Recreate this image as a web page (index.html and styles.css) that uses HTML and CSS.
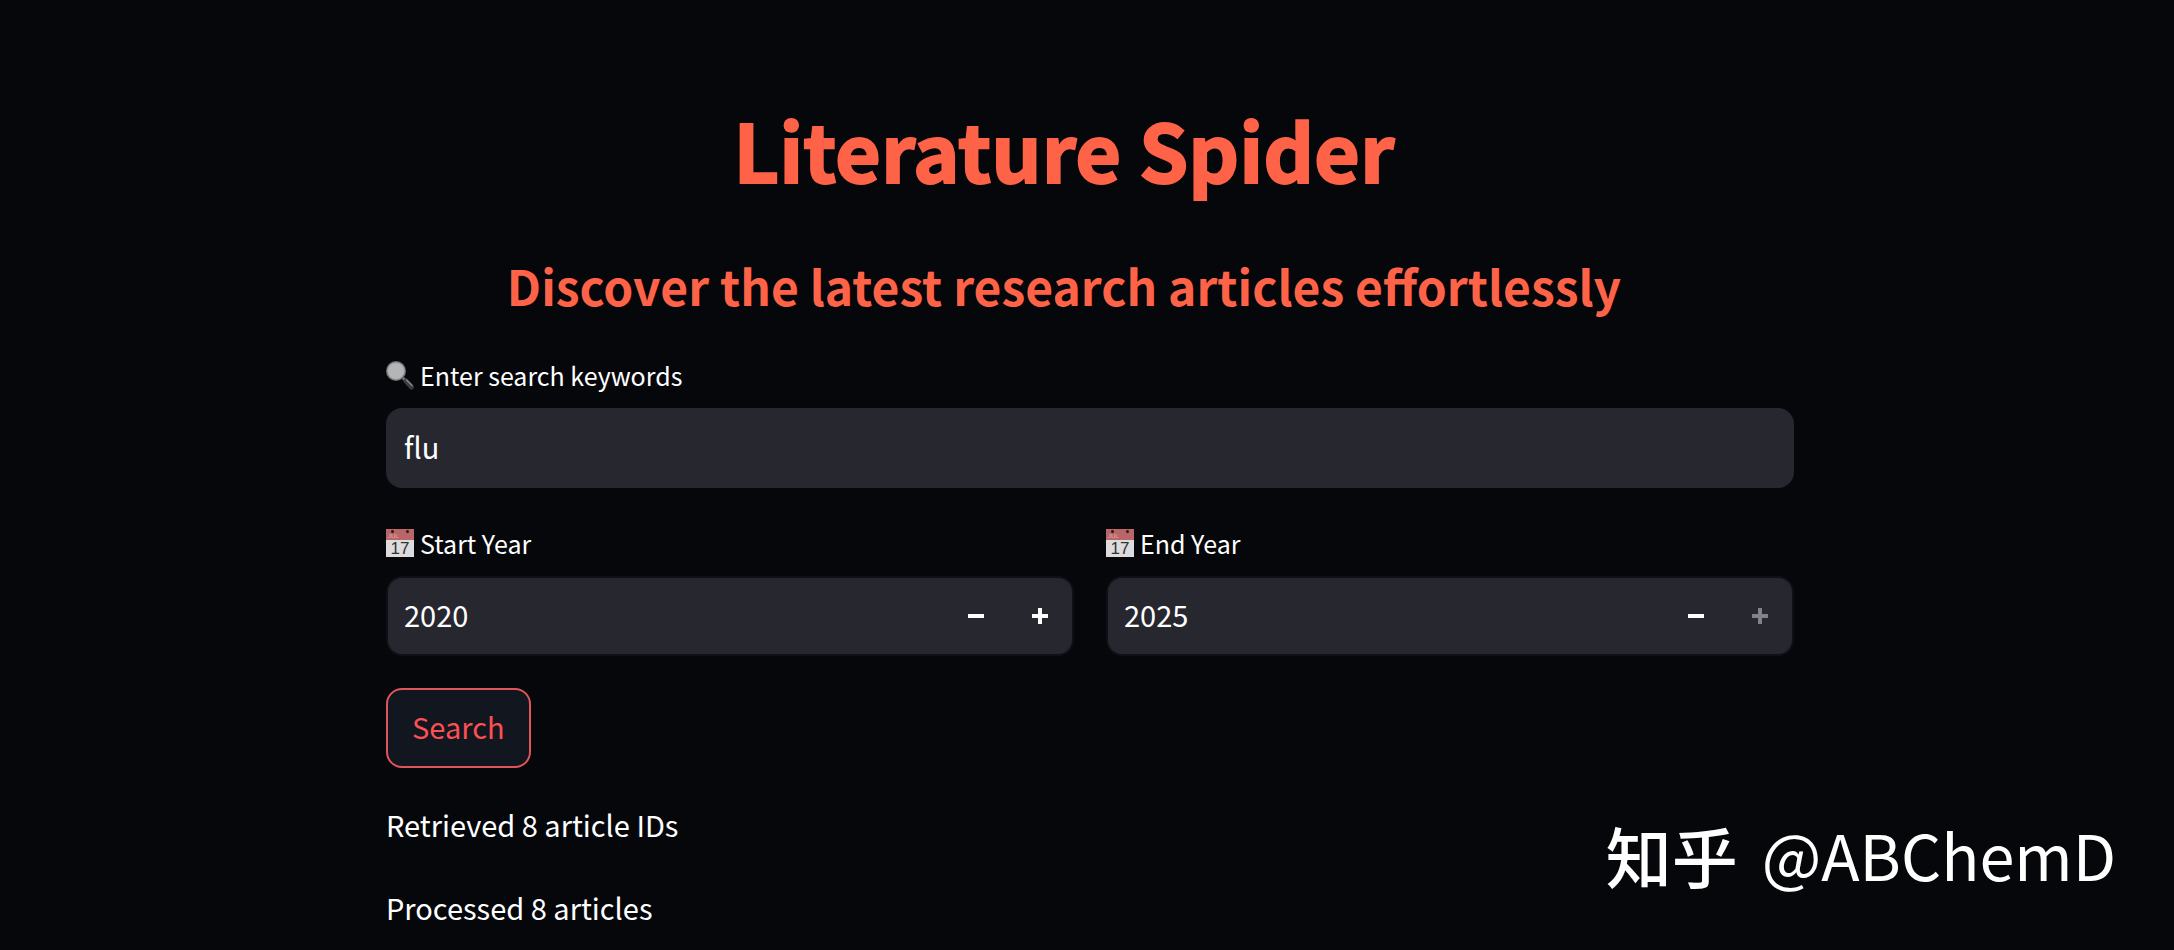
FILE: index.html
```html
<!DOCTYPE html>
<html lang="en">
<head>
  <meta charset="UTF-8">
  <meta name="viewport" content="width=device-width, initial-scale=1.0">
  <title>Literature Spider</title>
  <link rel="stylesheet" href="styles.css">
</head>
<body>
  <main class="container">
    <h1>Literature Spider</h1>
    <h2>Discover the latest research articles effortlessly</h2>

    <form id="searchForm">
      <div class="form-group">
        <label for="keywords">
          <svg class="icon" viewBox="0 0 28 28" aria-hidden="true">
            <path d="M17 17l2 2" stroke="#77797c" stroke-width="3"/>
            <path d="M20 20l5.500 6" stroke="#3a3c40" stroke-width="5" stroke-linecap="round"/>
            <path d="M20.500 19l5.500 5.500" stroke="#85878a" stroke-width="1.500" stroke-linecap="round"/>
            <circle cx="10" cy="10" r="10" fill="#6d6f71"/>
            <circle cx="10" cy="10" r="9" fill="#98999b"/>
            <circle cx="10" cy="10" r="8" fill="#b4b5b7"/>
          </svg>
          Enter search keywords
        </label>
        <input class="field" type="text" id="keywords" value="flu">
      </div>

      <div class="form-row">
        <div class="form-group">
          <label for="startYear">
            <svg class="icon" viewBox="0 0 28 28" aria-hidden="true">
              <rect width="28" height="28" fill="#dcdcdc"/>
              <rect width="28" height="11" fill="#b9666a"/>
              <circle cx="6.500" cy="2.500" r="1.500" fill="#2b1316"/>
              <circle cx="21.500" cy="2.500" r="1.500" fill="#2b1316"/>
              <text class="icon-month" x="2" y="9">JUL</text>
              <text class="icon-day" x="14" y="25">17</text>
            </svg>
            Start Year
          </label>
          <div class="field number-field">
            <input type="number" id="startYear" value="2020" max="2025">
            <button type="button" class="step" aria-label="Decrease start year">
              <svg viewBox="0 0 16 16"><path d="M0 6h16v4H0z"/></svg>
            </button>
            <button type="button" class="step" aria-label="Increase start year">
              <svg viewBox="0 0 16 16"><path d="M6 0h4v6h6v4h-6v6H6v-6H0V6h6z"/></svg>
            </button>
          </div>
        </div>

        <div class="form-group">
          <label for="endYear">
            <svg class="icon" viewBox="0 0 28 28" aria-hidden="true">
              <rect width="28" height="28" fill="#dcdcdc"/>
              <rect width="28" height="11" fill="#b9666a"/>
              <circle cx="6.500" cy="2.500" r="1.500" fill="#2b1316"/>
              <circle cx="21.500" cy="2.500" r="1.500" fill="#2b1316"/>
              <text class="icon-month" x="2" y="9">JUL</text>
              <text class="icon-day" x="14" y="25">17</text>
            </svg>
            End Year
          </label>
          <div class="field number-field">
            <input type="number" id="endYear" value="2025" max="2025">
            <button type="button" class="step" aria-label="Decrease end year">
              <svg viewBox="0 0 16 16"><path d="M0 6h16v4H0z"/></svg>
            </button>
            <button type="button" class="step" aria-label="Increase end year" disabled>
              <svg viewBox="0 0 16 16"><path d="M6 0h4v6h6v4h-6v6H6v-6H0V6h6z"/></svg>
            </button>
          </div>
        </div>
      </div>

      <button type="submit" class="search-btn">Search</button>
    </form>

    <div class="status">
      <p>Retrieved 8 article IDs</p>
      <p>Processed 8 articles</p>
    </div>
  </main>

  <div class="watermark"><span class="brand" lang="zh">知乎</span> <span>@ABChemD</span></div>
</body>
</html>
```
FILE: styles.css
```css
* {
  box-sizing: border-box;
}

body {
  margin: 0;
  padding-left: 6px;
  background: #06070b;
  color: #fff;
  font-family: "Noto Sans CJK SC", "Noto Sans", sans-serif;
  font-size: 29px;
  line-height: 48px;
}

.container {
  max-width: 1408px;
  margin: 0 auto;
  padding-top: 96px;
}

h1,
h2 {
  margin: 0;
  padding-right: 52px;
  color: #ff6347;
  text-align: center;
  font-weight: 700;
}

h1 {
  margin-bottom: 48px;
  font-size: 79px;
  line-height: 106px;
  -webkit-text-stroke: 2px #ff6347;
}

h2 {
  margin-bottom: 32px;
  font-size: 48px;
  line-height: 70px;
}

label {
  display: flex;
  align-items: center;
  gap: 6px;
  margin-bottom: 10px;
  font-size: 25px;
  line-height: 46px;
}

input,
button {
  font: inherit;
  color: inherit;
}

form {
  display: flex;
  flex-direction: column;
  gap: 32px;
}

.form-row {
  display: grid;
  grid-template-columns: 1fr 1fr;
  gap: 32px;
}

.field {
  display: block;
  width: 100%;
  height: 80px;
  padding: 0 16px 4px;
  border: 2px solid #272730;
  border-radius: 16px;
  background: #272730;
}

.number-field {
  display: flex;
  padding: 0;
  border-color: #0f1016;
}

.number-field input {
  flex: 1;
  min-width: 0;
  padding: 0 16px 4px;
  border: none;
  background: none;
  appearance: textfield;
}

.step {
  display: flex;
  align-items: center;
  justify-content: center;
  width: 64px;
  padding: 0;
  border: none;
  background: none;
  cursor: pointer;
}

.step svg {
  width: 16px;
  height: 16px;
  fill: currentColor;
}

.step:disabled {
  color: #82828c;
  cursor: not-allowed;
}

.search-btn {
  align-self: flex-start;
  height: 80px;
  padding: 0 24px 4px;
  border: 2px solid #e0555c;
  border-radius: 16px;
  background: #11161f;
  color: #fa5053;
  cursor: pointer;
}

.status {
  display: flex;
  flex-direction: column;
  gap: 35px;
  margin-top: 32px;
}

.status p {
  margin: 0;
}

.icon {
  width: 28px;
  height: 28px;
  overflow: visible;
}

.icon-month,
.icon-day {
  font-family: "Liberation Sans", sans-serif;
  font-weight: 400;
}

.icon-month {
  font-size: 6px;
  fill: #e8a9ab;
}

.icon-day {
  font-size: 17px;
  text-anchor: middle;
  fill: #333;
}

.watermark {
  position: absolute;
  right: 58px;
  bottom: 60px;
  display: flex;
  gap: 24px;
  color: #fff;
  font-size: 63px;
  font-weight: 400;
  line-height: 72px;
}

.brand {
  font-size: 66px;
  font-weight: 500;
}
```
